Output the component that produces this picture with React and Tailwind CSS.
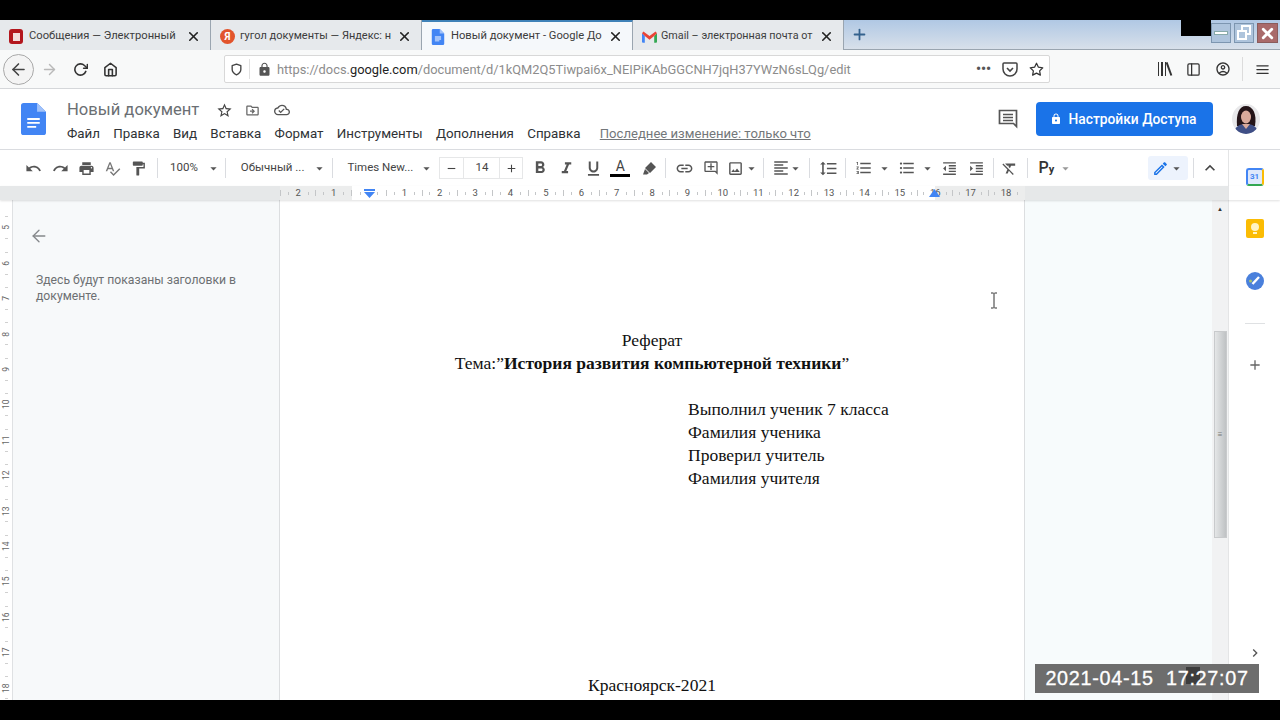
import React from "react";
import {
  MdUndo, MdRedo, MdPrint, MdSpellcheck, MdFormatPaint, MdFormatBold, MdFormatItalic, MdFormatUnderlined,
  MdLink, MdOutlineAddComment, MdOutlineImage, MdFormatAlignLeft, MdFormatLineSpacing, MdFormatListNumbered,
  MdFormatListBulleted, MdFormatIndentDecrease, MdFormatIndentIncrease, MdFormatClear, MdOutlineEdit, MdExpandLess,
  MdArrowDropDown, MdStarBorder, MdOutlineDriveFileMove, MdOutlineCloudDone, MdLock, MdAdd, MdRemove, MdChevronRight, MdOutlineAccountCircle
} from "react-icons/md";
import { FiRotateCw, FiHome, FiStar, FiShield, FiMenu, FiSidebar, FiArrowLeft, FiArrowRight, FiX, FiPlus } from "react-icons/fi";

const Tab = ({ icon, title, active, size = "text-[11.2px]" }) => (
  <div className={`w-[211px] h-[30px] flex items-center pl-[9px] pr-[9px] shrink-0 border-r border-[#9aa5b0] ${active ? "bg-[#f5f8fb] border-t-2 border-t-[#3f82b8] pt-[1px]" : "bg-[#e6e9ec] pt-[3px]"}`}>
    {icon}
    <span className={`ml-[6px] flex-1 min-w-0 whitespace-nowrap text-[#3c3c3c] ${size}`}>{title}</span>
    <FiX className="text-[15px] text-[#222] shrink-0" strokeWidth={2.5} />
  </div>
);

const DocIcon = ({ w = 14, h = 16 }) => (
  <svg width={w} height={h} viewBox="0 0 14 18" className="shrink-0">
    <path d="M1.5 0H9l5 5v11.5a1.5 1.5 0 0 1-1.5 1.5h-11A1.5 1.5 0 0 1 0 16.5v-15A1.5 1.5 0 0 1 1.5 0z" fill="#4285f4" />
    <path d="M9 0l5 5H9z" fill="#a1c2fa" />
    <path d="M3.5 8.5h7v1h-7zM3.5 10.7h7v1h-7zM3.5 12.9h5v1h-5z" fill="#fff" />
  </svg>
);

const Sep = () => <div className="w-px h-[20px] bg-[#dadce0] shrink-0" />;
const I = ({ c: C, s = 17, x = "text-[#555]" }) => <C size={s} className={`${x} shrink-0`} />;
const Caret = ({ x = "" }) => <MdArrowDropDown size={15} className={`text-[#555] shrink-0 ${x}`} />;
const G = ({ w }) => <div className="shrink-0" style={{ width: w }} />;

const hNums = ["2", "1", "", "1", "2", "3", "4", "5", "6", "7", "8", "9", "10", "11", "12", "13", "14", "15", "16", "17", "18"];
const vNums = ["5", "6", "7", "8", "9", "10", "11", "12", "13", "14", "15", "16", "17", "18"];
const menus = ["Файл", "Правка", "Вид", "Вставка", "Формат", "Инструменты", "Дополнения", "Справка"];

export default function App() {
  return (
    <div className="relative w-[1280px] h-[720px] overflow-hidden bg-black flex flex-col font-['Roboto',sans-serif]">
      <div className="h-[20px] shrink-0" />
      {/* tabs */}
      <div className="h-[30px] shrink-0 flex bg-gradient-to-b from-[#b0c8e4] to-[#d8e0ea] border-b border-[#9aa5b0]">
        <Tab title="Сообщения — Электронный" icon={<div className="w-[14px] h-[15px] rounded-[3px] bg-[#b3161d] flex items-center justify-center shrink-0"><div className="w-[7px] h-[8px] bg-[#f3dcdc]" /></div>} />
        <Tab size="text-[11px]" title="гугол документы — Яндекс: н" icon={<div className="w-[15px] h-[15px] rounded-full bg-[#e2542c] text-white text-[10px] font-bold flex items-center justify-center shrink-0 -mr-px">Я</div>} />
        <Tab active title="Новый документ - Google До" icon={<DocIcon />} />
        <Tab size="text-[10.8px]" title="Gmail – электронная почта от" icon={
          <svg width="15" height="12" viewBox="0 0 16 12" className="shrink-0 -mr-[2px]"><path d="M0 2v9a1 1 0 0 0 1 1h2V5z" fill="#4285f4"/><path d="M16 2v9a1 1 0 0 1-1 1h-2V5z" fill="#34a853"/><path d="M0 2l3 3 5 4 5-4 3-3-1.5-2L8 5 1.5 0z" fill="#ea4335"/></svg>
        } />
        <div className="ml-[7px] h-full flex items-center"><FiPlus size={17} className="text-[#34628e]" strokeWidth={2.5} /></div>
      </div>
      {/* nav */}
      <div className="h-[39px] shrink-0 bg-[#f8f9f9] border-b border-[#d5d7da] flex items-center">
        <div className="ml-[3px] w-[31px] h-[31px] rounded-full border border-[#a9a9a9] bg-[#f4f4f4] flex items-center justify-center"><FiArrowLeft size={19} className="text-[#444]" /></div>
        <FiArrowRight size={17} className="ml-[7px] text-[#b9b9b9]" />
        <FiRotateCw size={15} className="ml-[15px] text-[#333]" strokeWidth={2.5} />
        <FiHome size={15} className="ml-[15px] text-[#333]" strokeWidth={2.5} />
        <div className="ml-[106px] w-[826px] h-[28px] bg-white border border-[#d8d8d8] rounded-[2px] flex items-center shrink-0">
          <FiShield size={13} className="ml-[5px] text-[#444]" strokeWidth={2.5} />
          <div className="ml-[6px] h-[20px] w-px bg-[#e0e0e0]" />
          <MdLock size={15} className="ml-[7px] text-[#555]" />
          <span className="ml-[5px] pt-px flex-1 text-[12.85px] text-[#8c8c8c] whitespace-nowrap overflow-hidden">https://docs.<span className="text-[#222]">google.com</span>/document/d/1kQM2Q5Tiwpai6x_NEIPiKAbGGCNH7jqH37YWzN6sLQg/edit</span>
          <span className="text-[14px] font-bold text-[#555] mr-[11px] leading-none">•••</span>
          <svg width="16" height="15" viewBox="0 0 16 15" className="mr-[11px]"><path d="M2 1h12a1 1 0 0 1 1 1v5a7 7 0 0 1-14 0V2a1 1 0 0 1 1-1z" fill="none" stroke="#444" strokeWidth="1.5"/><path d="M5 6l3 3 3-3" fill="none" stroke="#444" strokeWidth="1.6"/></svg>
          <FiStar size={15} className="mr-[5px] text-[#333]" strokeWidth={2} />
        </div>
        <div className="ml-[106px] w-[15px] h-[15px] flex gap-[2px] items-center justify-center">
          <div className="w-[1.5px] h-[14px] bg-[#333]" /><div className="w-[1.5px] h-[14px] bg-[#333]" /><div className="w-[1.5px] h-[14px] bg-[#333]" /><div className="w-[1.5px] h-[14px] bg-[#333] -rotate-[20deg]" />
        </div>
        <FiSidebar size={15} className="ml-[15px] text-[#333]" />
        <MdOutlineAccountCircle size={16} className="ml-[14px] text-[#333]" />
        <div className="ml-[11px] h-[24px] w-px bg-[#dcdcdc]" />
        <FiMenu size={15} className="ml-[12px] text-[#333]" />
      </div>
      {/* docs header */}
      <div className="h-[61px] shrink-0 bg-white flex items-start border-b border-[#dadce0]">
        <div className="ml-[21px] mt-[13px]"><DocIcon w={25} h={34} /></div>
        <div className="ml-[21px] mt-[8px] flex flex-col">
          <div className="flex items-center h-[26px]">
            <span className="text-[16.6px] text-[#6b6f73] leading-none">Новый документ</span>
            <MdStarBorder size={17} className="ml-[17px] text-[#444]" />
            <MdOutlineDriveFileMove size={15} className="ml-[12px] text-[#666]" />
            <MdOutlineCloudDone size={16} className="ml-[13.5px] text-[#555]" />
          </div>
          <div className="flex items-center gap-[13.3px] mt-[1px] h-[20px] text-[13.35px] text-[#303336] whitespace-nowrap">
            {menus.map((m) => <span key={m}>{m}</span>)}
            <span className="ml-[6px] text-[13.1px] text-[#73777a] underline">Последнее изменение: только что</span>
          </div>
        </div>
        <div className="ml-auto flex items-center mt-[13px]">
          <svg width="22" height="22" viewBox="0 0 22 22"><path d="M2.5 2.5h17v16l-3-3h-14z" fill="none" stroke="#555" strokeWidth="1.7"/><path d="M6 6.5h10M6 9.5h10M6 12.5h10" stroke="#555" strokeWidth="1.5"/></svg>
          <div className="ml-[17px] w-[177px] h-[34px] pr-[2px] rounded-[4px] bg-[#1a73e8] flex items-center justify-center text-white text-[13.8px] font-medium">
            <MdLock size={12} className="mr-[6px]" />Настройки Доступа
          </div>
          <svg width="30" height="30" viewBox="0 0 30 30" className="ml-[18px] mr-[19px]">
            <clipPath id="av"><ellipse cx="15" cy="15" rx="14" ry="15" /></clipPath>
            <g clipPath="url(#av)">
              <rect width="30" height="30" fill="#e8e8ea" />
              <path d="M6 22C5 10 8 2 15 2s11 8 9 20z" fill="#241418" />
              <ellipse cx="15" cy="13" rx="5" ry="6.5" fill="#d9a99b" />
              <path d="M3 30c0-7 5-10 12-10s12 3 12 10z" fill="#3f4f86" />
              <path d="M11 20l4 5 4-5z" fill="#d9a99b" />
            </g>
          </svg>
        </div>
      </div>
      {/* toolbar */}
      <div className="h-[36px] shrink-0 bg-white flex items-center pl-[25px]">
        <div className="flex items-center flex-1 min-w-0">
          <I c={MdUndo} /><G w={10} /><I c={MdRedo} /><G w={9} /><I c={MdPrint} /><G w={9} /><I c={MdSpellcheck} x="text-[#777]" /><G w={9} /><I c={MdFormatPaint} />
          <G w={10} /><Sep />
          <span className="ml-[12px] text-[11.5px] text-[#444]">100%</span><Caret x="ml-[8px]" />
          <G w={4} /><Sep />
          <span className="ml-[15px] text-[11.5px] text-[#444]">Обычный ...</span><Caret x="ml-[8px]" />
          <G w={5} /><Sep />
          <span className="ml-[14px] text-[11.5px] text-[#444]">Times New...</span><Caret x="ml-[6px]" />
          <div className="ml-[5px] w-[84px] h-[22px] shrink-0 border border-[#e6e7e8] flex items-center text-[#444]">
            <div className="w-[24px] h-full flex items-center justify-center border-r border-[#e6e7e8]"><MdRemove size={13} /></div>
            <div className="flex-1 text-center text-[11.5px]">14</div>
            <div className="w-[23px] h-full flex items-center justify-center border-l border-[#e6e7e8]"><MdAdd size={13} /></div>
          </div>
          <G w={7} /><I c={MdFormatBold} s={20} /><G w={7} /><I c={MdFormatItalic} s={19} /><G w={8} /><I c={MdFormatUnderlined} s={19} />
          <div className="ml-[7px] w-[20px] shrink-0 flex flex-col items-center"><span className="text-[14px] leading-[14px] text-[#444]">A</span><div className="w-[20px] h-[3px] bg-black mt-[1px]" /></div>
          <G w={12} />
          <svg width="15" height="15" viewBox="0 0 15 15" className="shrink-0"><path d="M9 1l5 5-6 6-5-5zM3 8l4 4-2 1.5H1z" fill="#555" /></svg>
          <G w={8} /><Sep />
          <G w={9} /><I c={MdLink} s={19} /><G w={9} /><I c={MdOutlineAddComment} s={16} /><G w={8} /><I c={MdOutlineImage} s={17} /><Caret />
          <G w={4} /><Sep />
          <G w={8} /><I c={MdFormatAlignLeft} s={18} /><Caret x="-ml-[2px]" />
          <G w={5.5} /><Sep />
          <G w={9.5} /><I c={MdFormatLineSpacing} s={19} />
          <G w={7} /><Sep />
          <G w={9} /><I c={MdFormatListNumbered} s={18} /><Caret x="ml-[3.5px]" />
          <G w={6.5} /><I c={MdFormatListBulleted} s={18} /><Caret x="ml-[3.5px]" />
          <G w={6} /><I c={MdFormatIndentDecrease} s={17} /><G w={10} /><I c={MdFormatIndentIncrease} s={17} />
          <G w={8} /><Sep />
          <G w={7.5} /><I c={MdFormatClear} s={17} />
          <G w={9} /><Sep />
          <span className="ml-[10px] w-[18px] shrink-0 text-[16px] font-medium text-[#333] leading-none whitespace-nowrap">Р<span className="text-[11px] font-bold">у</span></span><Caret x="ml-[2px] text-[#999]" />
          <div className="ml-[75px] w-[40px] h-[24px] rounded-[3px] bg-[#edf3fd] flex items-center justify-center shrink-0"><MdOutlineEdit size={17} className="text-[#1a73e8]" /><Caret /></div>
          <G w={5} /><Sep />
          <MdExpandLess size={20} className="ml-[6px] text-[#444] shrink-0" />
        </div>
        <div className="w-[52px] h-full shrink-0 border-l border-[#e4e5e6] flex justify-center items-start pt-[18px]">
          <div className="w-[18px] h-[18px] rounded-[3px] bg-[#dfe9fb] border-[2px] border-[#4285f4] border-r-[#fbbc04] border-b-[#34a853] flex items-center justify-center text-[8px] font-bold text-[#4285f4] leading-none">31</div>
        </div>
      </div>
      {/* ruler */}
      <div className="relative z-10 h-[14px] shrink-0 flex shadow-[0_1px_2px_rgba(0,0,0,0.12)]">
        <div className="w-[280px] bg-[#e6e8e9] shrink-0" />
        <div className="w-[745px] bg-[linear-gradient(to_right,#eceded_72px,#ffffff_72px,#ffffff_655px,#eceded_655px)] relative flex text-[9.5px] text-[#555] items-center shrink-0">
          {hNums.map((n, i) => (
            <div key={i} className="w-[35.4px] shrink-0 flex items-center">
              <div className="w-px h-[6px] bg-[#c4c6c8] shrink-0" />
              <div className="flex-1 flex items-center justify-evenly">
                <div className="w-px h-[3px] bg-[#c4c6c8]" /><span>{n}</span><div className="w-px h-[3px] bg-[#c4c6c8]" />
              </div>
            </div>
          ))}
          <svg width="11" height="9" viewBox="0 0 11 9" className="absolute left-[84px] top-[3px]"><path d="M0 0h11v2H0zM0 3h11L5.500 9z" fill="#4285f4"/></svg>
          <svg width="11" height="9" viewBox="0 0 11 9" className="absolute left-[649px] top-[3px]"><path d="M5.500 0L11 8H0z" fill="#4285f4"/></svg>
        </div>
        <div className="w-[203px] bg-[#e6e8e9] shrink-0" />
        <div className="flex-1 bg-white border-l border-[#e4e5e6]" />
      </div>
      {/* body */}
      <div className="h-[500px] shrink-0 flex overflow-hidden">
        <div className="w-[13px] shrink-0 bg-white border-r border-[#dfe1e3] flex flex-col items-center pt-[10px] text-[8.5px] text-[#666]">
          {vNums.map((n) => (
            <div key={n} className="h-[35.4px] shrink-0 flex flex-col items-center justify-evenly">
              <div className="w-[3px] h-px bg-[#d0d0d0]" />
              <span className="-rotate-90 leading-none">{n}</span>
              <div className="w-[3px] h-px bg-[#d0d0d0]" />
            </div>
          ))}
        </div>
        <div className="w-[266px] shrink-0 bg-[#f7f9fa] pl-[23px] pt-[26px]">
          <FiArrowLeft size={20} strokeWidth={1.6} className="-ml-[7px] text-[#85888b]" />
          <p className="mt-[26px] text-[12.2px] leading-[16px] text-[#6d7073] w-[215px]">Здесь будут показаны заголовки в документе.</p>
        </div>
        <div className="w-[746px] shrink-0 bg-white border-x border-[#dcdee0] flex flex-col pt-[128.500px] font-['Liberation_Serif',serif] text-[17.55px] leading-[23.1px] text-[#111]">
          <div className="text-center">Реферат</div>
          <div className="text-center">Тема:”<b>История развития компьютерной техники</b>”</div>
          <div className="h-[23px]" />
          <div className="pl-[408px]">Выполнил ученик 7 класса</div>
          <div className="pl-[408px]">Фамилия ученика</div>
          <div className="pl-[408px]">Проверил учитель</div>
          <div className="pl-[408px]">Фамилия учителя</div>
          <div className="mt-[184px] text-center">Красноярск-2021</div>
        </div>
        <div className="flex-1 bg-[#f7fbfc]" />
        <div className="w-[16px] shrink-0 bg-[#f1f2f3] flex flex-col items-center">
          <div className="h-[16px] flex items-center text-[6px] text-[#333]">▲</div>
          <div className="mt-[115px] w-[13px] h-[207px] bg-gradient-to-r from-[#e4e6e7] to-[#bfc2c4] border border-[#c8cacc] flex items-center justify-center text-[8px] text-[#777]">≡</div>
          <div className="mt-auto h-[14px] text-[6px] text-[#333]">▼</div>
        </div>
        <div className="w-[52px] shrink-0 bg-white border-l border-[#e4e5e6] flex flex-col items-center pt-[19px]">
          <div className="w-[18px] h-[19px] rounded-[2px] bg-[#fbbc04] flex flex-col items-center justify-center">
            <div className="w-[8px] h-[8px] rounded-full bg-[#fff3c4]" />
            <div className="w-[4px] h-[2px] mt-px bg-[#fff3c4]" />
          </div>
          <svg width="18" height="18" viewBox="0 0 18 18" className="mt-[34px]">
            <circle cx="9" cy="9" r="9" fill="#4a80dc" />
            <path d="M6.500 12L13 5" stroke="#fff" strokeWidth="2.400" />
            <circle cx="4.500" cy="9" r="1.500" fill="#a8c46a" />
          </svg>
          <div className="mt-[33px] w-[20px] h-px bg-[#dfe1e3]" />
          <MdAdd size={16} className="mt-[33px] text-[#666]" />
          <MdChevronRight size={16} className="mt-[272px] text-[#555]" />
        </div>
      </div>
      <div className="flex-1" />
      {/* overlays */}
      <div className="absolute left-[1181px] top-[20px] w-[30px] h-[16px] bg-black" />
      <div className="absolute left-[1211px] top-[23px] flex gap-[3px]">
        <div className="w-[20px] h-[20px] bg-[#aec4dc] border border-[#7d96b0] flex items-center justify-center"><div className="w-[14px] h-[4px] bg-white border border-[#8aa]" /></div>
        <div className="relative w-[20px] h-[20px] bg-[#aec4dc] border border-[#7d96b0]">
          <div className="absolute left-[6px] top-[1px] w-[10px] h-[10px] border-2 border-white" />
          <div className="absolute left-[2px] top-[6px] w-[10px] h-[10px] border-2 border-white bg-[#aec4dc]" />
        </div>
        <div className="w-[21px] h-[20px] bg-[#a96a6a] border border-[#8a5b5b] flex items-center justify-center"><FiX size={17} className="text-white" strokeWidth={4} /></div>
      </div>
      <div className="absolute left-[1035px] top-[664px] w-[224px] h-[29px] bg-[#6d6d6d] flex items-center justify-center font-['Liberation_Sans',sans-serif] text-[19.8px] text-white tracking-[0.7px] whitespace-pre [-webkit-text-stroke:0.3px_white]">
        <div className="absolute left-[151px] top-[3px] w-[14px] h-[17px] bg-[#3c3c3c]" />
        <span className="relative">2021-04-15  17:27:07</span>
      </div>
      <svg width="10" height="17" viewBox="0 0 10 17" className="absolute left-[988.5px] top-[292px]"><path d="M2 1h2.500M5.500 1H8M5 1v15M2 16h2.500M5.500 16H8" stroke="#333" strokeWidth="1" fill="none"/></svg>
    </div>
  );
}
